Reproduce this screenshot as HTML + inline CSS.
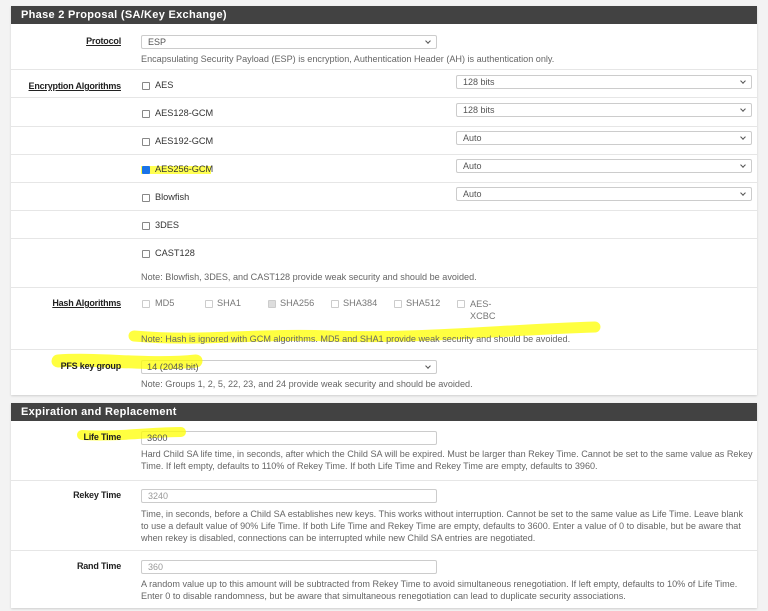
<!DOCTYPE html>
<html><head><meta charset="utf-8"><style>
*{margin:0;padding:0;box-sizing:border-box}
body{width:768px;height:611px;background:#f3f3f3;font-family:"Liberation Sans",sans-serif;color:#333;position:relative;overflow:hidden}
.panel{position:absolute;left:11px;width:746px;background:#fff;box-shadow:0 1px 2px rgba(0,0,0,.15)}
.hd{position:absolute;left:0;right:0;height:18px;background:#424242;color:#fff;font-weight:bold;font-size:11px;line-height:18px;padding-left:10px;letter-spacing:.3px}
.t{position:absolute;font-size:9.2px;white-space:nowrap}
.lb{position:absolute;right:636px;font-size:9px;font-weight:bold;color:#222;white-space:nowrap;letter-spacing:-.2px}
.u{text-decoration:underline}
.n{color:#666;font-size:9.1px;line-height:12px}
.hr{position:absolute;left:0;right:0;height:1px;background:#e6e6e6}
.sel,.inp{position:absolute;height:14px;border:1px solid #ccc;border-radius:2px;font-size:9px;line-height:12px;padding-left:6px;color:#555;background:#fff}
.sel:after{content:"";position:absolute;right:6px;top:3px;width:3px;height:3px;border-right:1px solid #555;border-bottom:1px solid #555;transform:rotate(45deg)}
.cb{position:absolute;width:8px;height:8px;border:1px solid #888;border-radius:1px;background:#fff}
.cb.d{border-color:#ccc}
.dis{color:#777}
</style></head><body>

<div class="panel" style="top:6px;height:389px">
<div class="hd" style="top:0">Phase 2 Proposal (SA/Key Exchange)</div>
<div class="lb u" style="top:30px">Protocol</div>
<div class="sel" style="left:130px;top:29px;width:296px">ESP</div>
<div class="t n" style="left:130px;top:47px">Encapsulating Security Payload (ESP) is encryption, Authentication Header (AH) is authentication only.</div>
<div class="hr" style="top:63px"></div>
<div class="lb u" style="top:75px">Encryption Algorithms</div>
<div class="cb" style="left:131px;top:76px"></div><div class="t" style="left:144px;top:74px">AES</div>
<div class="sel" style="left:445px;top:69px;width:296px">128 bits</div>
<div class="hr" style="top:91px"></div>
<div class="cb" style="left:131px;top:104px"></div><div class="t" style="left:144px;top:102px">AES128-GCM</div>
<div class="sel" style="left:445px;top:97px;width:296px">128 bits</div>
<div class="hr" style="top:120px"></div>
<div class="cb" style="left:131px;top:132px"></div><div class="t" style="left:144px;top:130px">AES192-GCM</div>
<div class="sel" style="left:445px;top:125px;width:296px">Auto</div>
<div class="hr" style="top:148px"></div>
<div class="t" style="left:130px;top:160px;width:70px;height:8px;background:#ffff33;opacity:.85"></div>
<div class="cb" style="left:131px;top:160px;background:#1a73e8;border-color:#1a73e8"></div><div class="t" style="left:144px;top:158px">AES256-GCM</div>
<div class="sel" style="left:445px;top:153px;width:296px">Auto</div>
<div class="hr" style="top:176px"></div>
<div class="cb" style="left:131px;top:188px"></div><div class="t" style="left:144px;top:186px">Blowfish</div>
<div class="sel" style="left:445px;top:181px;width:296px">Auto</div>
<div class="hr" style="top:204px"></div>
<div class="cb" style="left:131px;top:216px"></div><div class="t" style="left:144px;top:214px">3DES</div>
<div class="hr" style="top:232px"></div>
<div class="cb" style="left:131px;top:244px"></div><div class="t" style="left:144px;top:242px">CAST128</div>
<div class="t n" style="left:130px;top:265px">Note: Blowfish, 3DES, and CAST128 provide weak security and should be avoided.</div>
<div class="hr" style="top:281px"></div>
<div class="lb u" style="top:292px">Hash Algorithms</div>
<div class="cb d" style="left:131px;top:294px"></div><div class="t dis" style="left:144px;top:292px">MD5</div>
<div class="cb d" style="left:194px;top:294px"></div><div class="t dis" style="left:206px;top:292px">SHA1</div>
<div class="cb d" style="left:257px;top:294px;background:#ddd"></div><div class="t dis" style="left:269px;top:292px">SHA256</div>
<div class="cb d" style="left:320px;top:294px"></div><div class="t dis" style="left:332px;top:292px">SHA384</div>
<div class="cb d" style="left:383px;top:294px"></div><div class="t dis" style="left:395px;top:292px">SHA512</div>
<div class="cb d" style="left:446px;top:294px"></div><div class="t dis" style="left:459px;top:292px;line-height:12px">AES-<br>XCBC</div>
<div class="hr" style="top:343px"></div>
<div class="sel" style="left:130px;top:354px;width:296px"></div>
<div class="t n" style="left:130px;top:372px">Note: Groups 1, 2, 5, 22, 23, and 24 provide weak security and should be avoided.</div>
</div>

<div class="panel" style="top:403px;height:205px">
<div class="hd" style="top:0">Expiration and Replacement</div>
<div class="inp" style="left:130px;top:28px;width:296px"></div>
<div class="t n" style="left:130px;top:45px">Hard Child SA life time, in seconds, after which the Child SA will be expired. Must be larger than Rekey Time. Cannot be set to the same value as Rekey<br>Time. If left empty, defaults to 110% of Rekey Time. If both Life Time and Rekey Time are empty, defaults to 3960.</div>
<div class="hr" style="top:77px"></div>
<div class="lb" style="top:87px">Rekey Time</div>
<div class="inp" style="left:130px;top:86px;width:296px;color:#999">3240</div>
<div class="t n" style="left:130px;top:105px">Time, in seconds, before a Child SA establishes new keys. This works without interruption. Cannot be set to the same value as Life Time. Leave blank<br>to use a default value of 90% Life Time. If both Life Time and Rekey Time are empty, defaults to 3600. Enter a value of 0 to disable, but be aware that<br>when rekey is disabled, connections can be interrupted while new Child SA entries are negotiated.</div>
<div class="hr" style="top:147px"></div>
<div class="lb" style="top:158px">Rand Time</div>
<div class="inp" style="left:130px;top:157px;width:296px;color:#999">360</div>
<div class="t n" style="left:130px;top:175px">A random value up to this amount will be subtracted from Rekey Time to avoid simultaneous renegotiation. If left empty, defaults to 10% of Life Time.<br>Enter 0 to disable randomness, but be aware that simultaneous renegotiation can lead to duplicate security associations.</div>
</div>

<svg style="position:absolute;left:0;top:0;pointer-events:none" width="768" height="611">
<g stroke="#ffff00" stroke-opacity=".75" fill="none" stroke-linecap="round">
<path d="M134 336 C200 342 260 333 330 336 C420 339 500 330 595 327" stroke-width="11"/>
<path d="M58 361 C100 358 150 366 196 361" stroke-width="13"/>
<path d="M82 435 C120 437 150 432 181 432" stroke-width="10"/>
</g>
</svg>
<div class="lb" style="position:absolute;left:0;width:121px;right:auto;text-align:right;top:361px">PFS key group</div>
<div class="lb" style="position:absolute;left:0;width:121px;right:auto;text-align:right;top:432px">Life Time</div>
<div class="t" style="position:absolute;left:147px;top:362px;color:#555">14 (2048 bit)</div>
<div class="t" style="position:absolute;left:147px;top:433px;color:#555">3600</div>
<div class="t n" style="position:absolute;left:141px;top:333px">Note: Hash is ignored with GCM algorithms. MD5 and SHA1 provide weak security and should be avoided.</div>
</body></html>
